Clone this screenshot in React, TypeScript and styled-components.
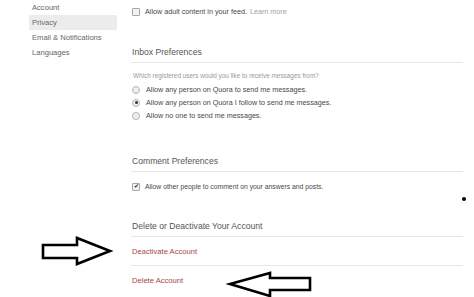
import styled, { createGlobalStyle } from "styled-components";

const GlobalStyle = createGlobalStyle`
  html, body {
    margin: 0;
    padding: 0;
    background: #ffffff;
  }
  body {
    font-family: "Liberation Sans", Arial, sans-serif;
    color: #444444;
  }
`;

const Page = styled.div`
  position: relative;
  width: 474px;
  height: 297px;
  overflow: hidden;
  display: flex;
  padding-left: 29px;
  box-sizing: border-box;
`;

const Sidebar = styled.ul`
  list-style: none;
  margin: 0;
  padding: 0;
  width: 88px;
  flex-shrink: 0;
`;

const NavItem = styled.li<{ active?: boolean }>`
  height: 15px;
  line-height: 15px;
  padding-left: 3px;
  font-size: 7.6px;
  color: #666666;
  background: ${(p) => (p.active ? "#ececec" : "transparent")};
  border-radius: 1px;
`;

const Content = styled.div`
  margin-left: 14px;
  width: 332px;
  display: flex;
  flex-direction: column;
`;

const Row = styled.label<{ top?: number; small?: boolean }>`
  display: flex;
  align-items: center;
  height: 13px;
  margin-top: ${(p) => p.top ?? 0}px;
  font-size: ${(p) => (p.small ? 6.8 : 7.2)}px;
  color: #484848;
  padding-left: 1px;
`;

const Box = styled.span`
  width: 6px;
  height: 6px;
  border: 1px solid #a8a8a8;
  background: #f2f2f2;
  border-radius: 1px;
  margin-right: 5px;
  display: flex;
  align-items: center;
  justify-content: center;
  font-size: 5.5px;
  line-height: 1;
  color: #222;
`;

const Radio = styled.span<{ checked?: boolean }>`
  width: 6px;
  height: 6px;
  border: 1px solid #b5b5b5;
  background: #eeeeee;
  border-radius: 50%;
  margin-right: 6px;
  display: flex;
  align-items: center;
  justify-content: center;
  &::after {
    content: "";
    width: 3px;
    height: 3px;
    border-radius: 50%;
    background: ${(p) => (p.checked ? "#333" : "transparent")};
  }
`;

const Muted = styled.span`
  color: #a0a0a0;
  margin-left: 3px;
`;

const Heading = styled.h3<{ top: number }>`
  margin: ${(p) => p.top}px 0 0;
  font-size: 8.6px;
  font-weight: normal;
  color: #555555;
  line-height: 14px;
  padding: 0 0 3px 1px;
  border-bottom: 1px solid #e6e6e6;
`;

const Question = styled.p`
  margin: 6px 0 0;
  line-height: 14px;
  font-size: 6.4px;
  color: #9a9a9a;
  padding-left: 2px;
`;

const DangerLink = styled.a<{ last?: boolean }>`
  display: block;
  height: 28px;
  line-height: 29px;
  font-size: 7.6px;
  color: #a5483e;
  padding-left: 1px;
  text-decoration: none;
  border-bottom: ${(p) => (p.last ? "none" : "1px solid #e6e6e6")};
`;

const Dot = styled.span`
  position: absolute;
  left: 462px;
  top: 197px;
  width: 4px;
  height: 4px;
  border-radius: 50%;
  background: #000;
`;

const Arrow = styled.svg<{ left: number; top: number }>`
  position: absolute;
  left: ${(p) => p.left}px;
  top: ${(p) => p.top}px;
  overflow: visible;
`;

export default function App() {
  return (
    <>
      <GlobalStyle />
      <Page>
        <Sidebar>
          <NavItem>Account</NavItem>
          <NavItem active>Privacy</NavItem>
          <NavItem>Email &amp; Notifications</NavItem>
          <NavItem>Languages</NavItem>
        </Sidebar>
        <Content>
          <Row top={5}>
            <Box />
            Allow adult content in your feed.<Muted>Learn more</Muted>
          </Row>

          <Heading top={27}>Inbox Preferences</Heading>
          <Question>Which registered users would you like to receive messages from?</Question>
          <Row>
            <Radio />
            Allow any person on Quora to send me messages.
          </Row>
          <Row>
            <Radio checked />
            Allow any person on Quora I follow to send me messages.
          </Row>
          <Row>
            <Radio />
            Allow no one to send me messages.
          </Row>

          <Heading top={32}>Comment Preferences</Heading>
          <Row top={8} small>
            <Box>✔</Box>
            Allow other people to comment on your answers and posts.
          </Row>

          <Heading top={26}>Delete or Deactivate Your Account</Heading>
          <DangerLink>Deactivate Account</DangerLink>
          <DangerLink last>Delete Account</DangerLink>
        </Content>

        <Dot />
        <Arrow left={40} top={235} width={74} height={32} viewBox="40 235 74 32">
          <polygon
            points="43,245 77,245 77,238 110,251 77,264 77,258 43,258"
            fill="#fff"
            stroke="#000"
            strokeWidth={2.6}
          />
        </Arrow>
        <Arrow left={226} top={270} width={88} height={30} viewBox="226 270 88 30">
          <polygon
            points="230,284 270,273 270,278 310,278 310,290 270,290 270,296"
            fill="#fff"
            stroke="#000"
            strokeWidth={2.6}
          />
        </Arrow>
      </Page>
    </>
  );
}
